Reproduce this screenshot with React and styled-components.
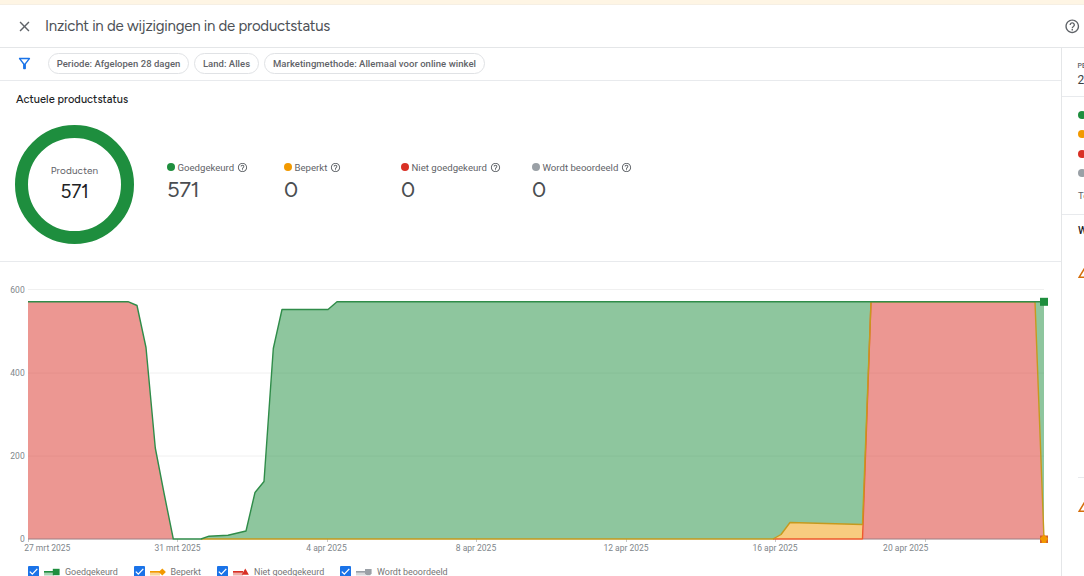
import React from 'react'
import styled, { createGlobalStyle } from "styled-components";
import { MdClose, MdHelpOutline, MdOutlineFilterAlt } from "react-icons/md";

const GREEN = "#1e8e3e";
const ORANGE = "#f29900";
const RED = "#d93025";
const GREY = "#9aa0a6";

const filters = [
    { label: "Periode: Afgelopen 28 dagen", width: 141 },
    { label: "Land: Alles", width: 65 },
    { label: "Marketingmethode: Allemaal voor online winkel", width: 221 },
];

const statuses = [
    { label: "Goedgekeurd", value: 571, color: GREEN, width: 117, text: 56 },
    { label: "Beperkt", value: 0, color: ORANGE, width: 117, text: 32 },
    { label: "Niet goedgekeurd", value: 0, color: RED, width: 131, text: 74.5 },
    { label: "Wordt beoordeeld", value: 0, color: GREY, width: 120, text: 74.5 },
];

const legend = [
    { label: "Goedgekeurd", color: GREEN, shape: "square", width: 105.5 },
    { label: "Beperkt", color: ORANGE, shape: "diamond", width: 83.5 },
    { label: "Niet goedgekeurd", color: RED, shape: "triangle", width: 123 },
    { label: "Wordt beoordeeld", color: GREY, shape: "shield", width: 120 },
];

const yTicks = [
    { label: "600", y: 27.5 },
    { label: "400", y: 111 },
    { label: "200", y: 194 },
    { label: "0", y: 277 },
];

const xTicks = [
    { label: "27 mrt 2025", x: 47.3, tick: 28.5 },
    { label: "31 mrt 2025", x: 177.5, tick: 177.5 },
    { label: "4 apr 2025", x: 326.5, tick: 327.5 },
    { label: "8 apr 2025", x: 476, tick: 476.5 },
    { label: "12 apr 2025", x: 626, tick: 626.5 },
    { label: "16 apr 2025", x: 775, tick: 775.5 },
    { label: "20 apr 2025", x: 905.7, tick: 925.5 },
];

const startDrop = "28,39.7 128,39.7 137,43.5 146,85.5 155.3,186 164,231 173.3,277";
const greenRise = "201,277 209,274.2 228,273.3 246,269 255,230.5 264,219.5 273.3,86.5 282,47.5 328,47.5 337,39.7";
const orangeBump = "773,277 781,272.5 790,260.5 862.5,262.5";
const redBlock = "862.5,277 871,39.7 1035,39.7 1044,277";

function StatusChart() {
    return (
        <ChartSvg viewBox="0 0 1061 293">
            {yTicks.map((t) => (
                <g key={t.label}>
                    <line x1="28" x2="1044" y1={t.y} y2={t.y} stroke="#f0f0f0" />
                    <AxisText x="24.7" y={t.y + 3.2} textAnchor="end">{t.label}</AxisText>
                </g>
            ))}
            {xTicks.map((t) => (
                <g key={t.label}>
                    <line x1={t.tick} x2={t.tick} y1="277" y2="280" stroke="#c8c8c8" />
                    <AxisText x={t.x} y="288.7" textAnchor="middle">{t.label}</AxisText>
                </g>
            ))}

            <polygon points={`28,277 ${startDrop}`} fill={RED} fillOpacity="0.5" />
            <polygon points={`${greenRise} 871,39.7 862.5,262.5 790,260.5 781,272.5 773,277`} fill={GREEN} fillOpacity="0.5" />
            <polygon points="1035,39.7 1044,39.7 1044,277" fill={GREEN} fillOpacity="0.5" />
            <polygon points={`${orangeBump} 862.5,277`} fill={ORANGE} fillOpacity="0.5" />
            <polygon points={redBlock} fill={RED} fillOpacity="0.5" />

            <Series points="773,277 862.5,277 871,39.7" stroke="#ee5a2c" />
            <Series points={`201,277 ${orangeBump} 871,39.7 1035,39.7 1044,277`} stroke="#c59a1e" />
            <line x1="28" x2="173" y1="277" y2="277" stroke="#a08084" />
            <line x1="863" x2="1044" y1="277" y2="277" stroke="#a08084" />
            <Series points={`${startDrop} ${greenRise} 1044,39.7`} stroke="#2f8c49" />

            <rect x="1040" y="35.8" width="8" height="8" fill={GREEN} />
            <rect x="1040" y="273.5" width="8" height="7.5" fill="#d3602a" />
            <path d="M1044 272.5l4.2 4.2-2 2.3v2h-4.4v-2l-2-2.3z" fill={ORANGE} />
        </ChartSvg>
    );
}

function LegendMark({ color, shape }) {
    return (
        <MarkSvg width="18" height="12" viewBox="0 0 18 12">
            <rect x="0" y="6" width="10" height="3.5" fill={color} opacity="0.4" />
            <rect x="0" y="5" width="10" height="1.6" fill={color} />
            {shape === "square" && <rect x="8.8" y="2.8" width="6.8" height="6.4" fill={color} />}
            {shape === "diamond" && <path d="M12.3 2.4l3.6 3.6-3.6 3.6L8.7 6z" fill={color} />}
            {shape === "triangle" && <path d="M12.3 2.6l3.6 6.2H8.7z" fill={color} />}
            {shape === "shield" && <path d="M9 3h6.6v4.6l-1.5 1.6h-3.6L9 7.6z" fill={color} />}
        </MarkSvg>
    );
}

function Warning() {
    return (
        <svg width="16" height="14" viewBox="0 0 16 14" fill="none" stroke="#d56e0c" strokeWidth="1.5">
            <path d="M1.2 12.2L8 1l6.8 11.2z" />
            <path d="M8 5v4" />
        </svg>
    );
}

export default function App() {
  return (
    <Page>
        <GlobalStyle />
        <Notice />
        <Header>
            <MdClose size={17} />
            <Title>Inzicht in de wijzigingen in de productstatus</Title>
            <MdHelpOutline size={16.5} />
        </Header>
        <Body>
            <Main>
                <FilterBar>
                    <MdOutlineFilterAlt size={17} />
                    <Chips>
                        {filters.map((f) => <Chip key={f.label} $width={f.width}>{f.label}</Chip>)}
                    </Chips>
                </FilterBar>
                <Overview>
                    <Heading>Actuele productstatus</Heading>
                    <Summary>
                        <Ring>
                            <RingLabel>Producten</RingLabel>
                            <RingValue>571</RingValue>
                        </Ring>
                        {statuses.map((s) => (
                            <Status key={s.label} $width={s.width}>
                                <StatusLabel>
                                    <Dot $color={s.color} $size={8} />
                                    <StatusName $width={s.text}>{s.label}</StatusName>
                                    <MdHelpOutline size={11} />
                                </StatusLabel>
                                <StatusValue>{s.value}</StatusValue>
                            </Status>
                        ))}
                    </Summary>
                </Overview>
                <StatusChart />
                <Legend>
                    {legend.map((l) => (
                        <LegendItem key={l.label} $width={l.width}>
                            <Check>
                                <svg width="11" height="11" viewBox="0 0 11 11" fill="none" stroke="#fff" strokeWidth="1.3">
                                    <path d="M1.8 5.6l2.5 2.5 5-5.2" />
                                </svg>
                            </Check>
                            <LegendMark color={l.color} shape={l.shape} />
                            <span>{l.label}</span>
                        </LegendItem>
                    ))}
                </Legend>
            </Main>
            <Aside>
                <Period>
                    <Caption>PERIODE</Caption>
                    <PeriodDate>27 mrt</PeriodDate>
                </Period>
                <Totals>
                    {statuses.map((s) => <Dot key={s.label} $color={s.color} $size={8} />)}
                    <Total>Totaal</Total>
                </Totals>
                <Changes>
                    <ChangesTitle>Wijzigingen</ChangesTitle>
                    <Change $height={214}><Warning /></Change>
                    <Warning />
                </Changes>
            </Aside>
        </Body>
    </Page>
  )
}

const GlobalStyle = createGlobalStyle`
*{
    box-sizing:border-box;
}
body{
    margin:0;
    overflow:hidden;
    background:#fff;
}
svg{
    flex-shrink:0;
}
`;

const Page = styled.div`
display:flex;
flex-direction:column;
width:1084px;
height:576px;
overflow:hidden;
font-family:Roboto, sans-serif;
color:#3c4043;
white-space:nowrap;
`;

const Notice = styled.div`
height:5px;
flex-shrink:0;
background:#fef5e4;
border-bottom:1px solid #f6efe3;
`;

const Header = styled.header`
display:flex;
align-items:center;
height:43px;
flex-shrink:0;
padding:0 0 0 16px;
border-bottom:1px solid #e4e6e8;
color:#5f6368;
`;

const Title = styled.h1`
margin:0 0 0 12px;
width:1019px;
flex-shrink:0;
font:400 15px Figtree, Lato, sans-serif;
letter-spacing:-0.25px;
color:#4d5156;
`;

const Body = styled.div`
display:grid;
grid-template-columns:1061px 120px;
flex:1;
min-height:0;
`;

const Main = styled.main`
display:flex;
flex-direction:column;
min-width:0;
`;

const FilterBar = styled.div`
display:flex;
align-items:center;
height:33px;
flex-shrink:0;
padding:0 0 1px 16px;
border-bottom:1px solid #e8eaed;
color:#1a73e8;
`;

const Chips = styled.div`
display:flex;
gap:5px;
margin-left:15px;
`;

const Chip = styled.div`
display:flex;
align-items:center;
justify-content:center;
width:${(p) => p.$width}px;
height:21px;
padding-bottom:1px;
border:1px solid #e0e2e5;
border-radius:11px;
font-size:9.5px;
font-weight:500;
letter-spacing:0.03px;
color:#5f6368;
`;

const Overview = styled.section`
height:181px;
flex-shrink:0;
padding:12px 15px 0;
border-bottom:1px solid #e8eaed;
`;

const Heading = styled.h2`
margin:0 0 0 1px;
height:31.5px;
font:500 11px/14px Figtree, Inter, sans-serif;
letter-spacing:0.05px;
color:#202124;
`;

const Summary = styled.div`
display:flex;
`;

const Ring = styled.div`
display:flex;
flex-direction:column;
align-items:center;
width:119px;
height:119px;
margin-right:33px;
padding-top:26.5px;
border:13.5px solid ${GREEN};
border-radius:50%;
`;

const RingLabel = styled.div`
font:400 10px/14px Figtree, Lato, sans-serif;
letter-spacing:0.1px;
color:#5f6368;
`;

const RingValue = styled.div`
margin-top:2px;
font:400 19px/24px Figtree, Lato, sans-serif;
letter-spacing:-0.4px;
color:#202124;
`;

const Status = styled.div`
width:${(p) => p.$width}px;
padding-top:36.5px;
`;

const StatusLabel = styled.div`
display:flex;
align-items:center;
height:12px;
color:#5f6368;
`;

const StatusName = styled.span`
width:${(p) => p.$width}px;
margin:0 3.5px 0 2.5px;
font-size:9.6px;
`;

const StatusValue = styled.div`
margin-top:4px;
font:400 22px/26px Figtree, Lato, sans-serif;
letter-spacing:-0.5px;
color:#4a4d51;
`;

const Dot = styled.span`
width:${(p) => p.$size}px;
height:${(p) => p.$size}px;
flex-shrink:0;
border-radius:50%;
background:${(p) => p.$color};
`;

const ChartSvg = styled.svg`
display:block;
width:1061px;
height:293px;
`;

const AxisText = styled.text`
font:400 8.5px Roboto, sans-serif;
fill:#80868b;
`;

const Series = styled.polyline`
fill:none;
stroke-width:1.4px;
stroke-linejoin:round;
`;

const Legend = styled.div`
display:flex;
padding:10.5px 0 0 28px;
`;

const LegendItem = styled.div`
display:flex;
align-items:center;
width:${(p) => p.$width}px;
font-size:8.95px;
color:#757575;

span{
    margin-left:3px;
}
`;

const Check = styled.div`
display:flex;
width:11px;
height:11px;
border-radius:1px;
background:#1a73e8;
`;

const MarkSvg = styled.svg`
margin-left:5px;
`;

const Aside = styled.aside`
border-left:1px solid #e4e6e8;
`;

const Period = styled.div`
height:49px;
padding:13px 0 0 15.5px;
border-bottom:1px solid #e8eaed;
`;

const Caption = styled.div`
font-size:7px;
font-weight:500;
line-height:10px;
color:#5f6368;
`;

const PeriodDate = styled.div`
margin-top:1px;
font-size:12px;
line-height:16px;
`;

const Totals = styled.div`
display:flex;
flex-direction:column;
gap:11.5px;
height:118px;
padding:13.5px 0 0 16px;
border-bottom:1px solid #e8eaed;
`;

const Total = styled.div`
font-size:9.5px;
line-height:14px;
color:#5f6368;
`;

const Changes = styled.div`
padding:9px 0 0 16px;
`;

const ChangesTitle = styled.div`
height:40px;
font-size:10.5px;
font-weight:500;
line-height:14px;
color:#202124;
`;

const Change = styled.div`
height:${(p) => p.$height}px;
margin-bottom:20px;
border-bottom:1px solid #e8eaed;
`;
